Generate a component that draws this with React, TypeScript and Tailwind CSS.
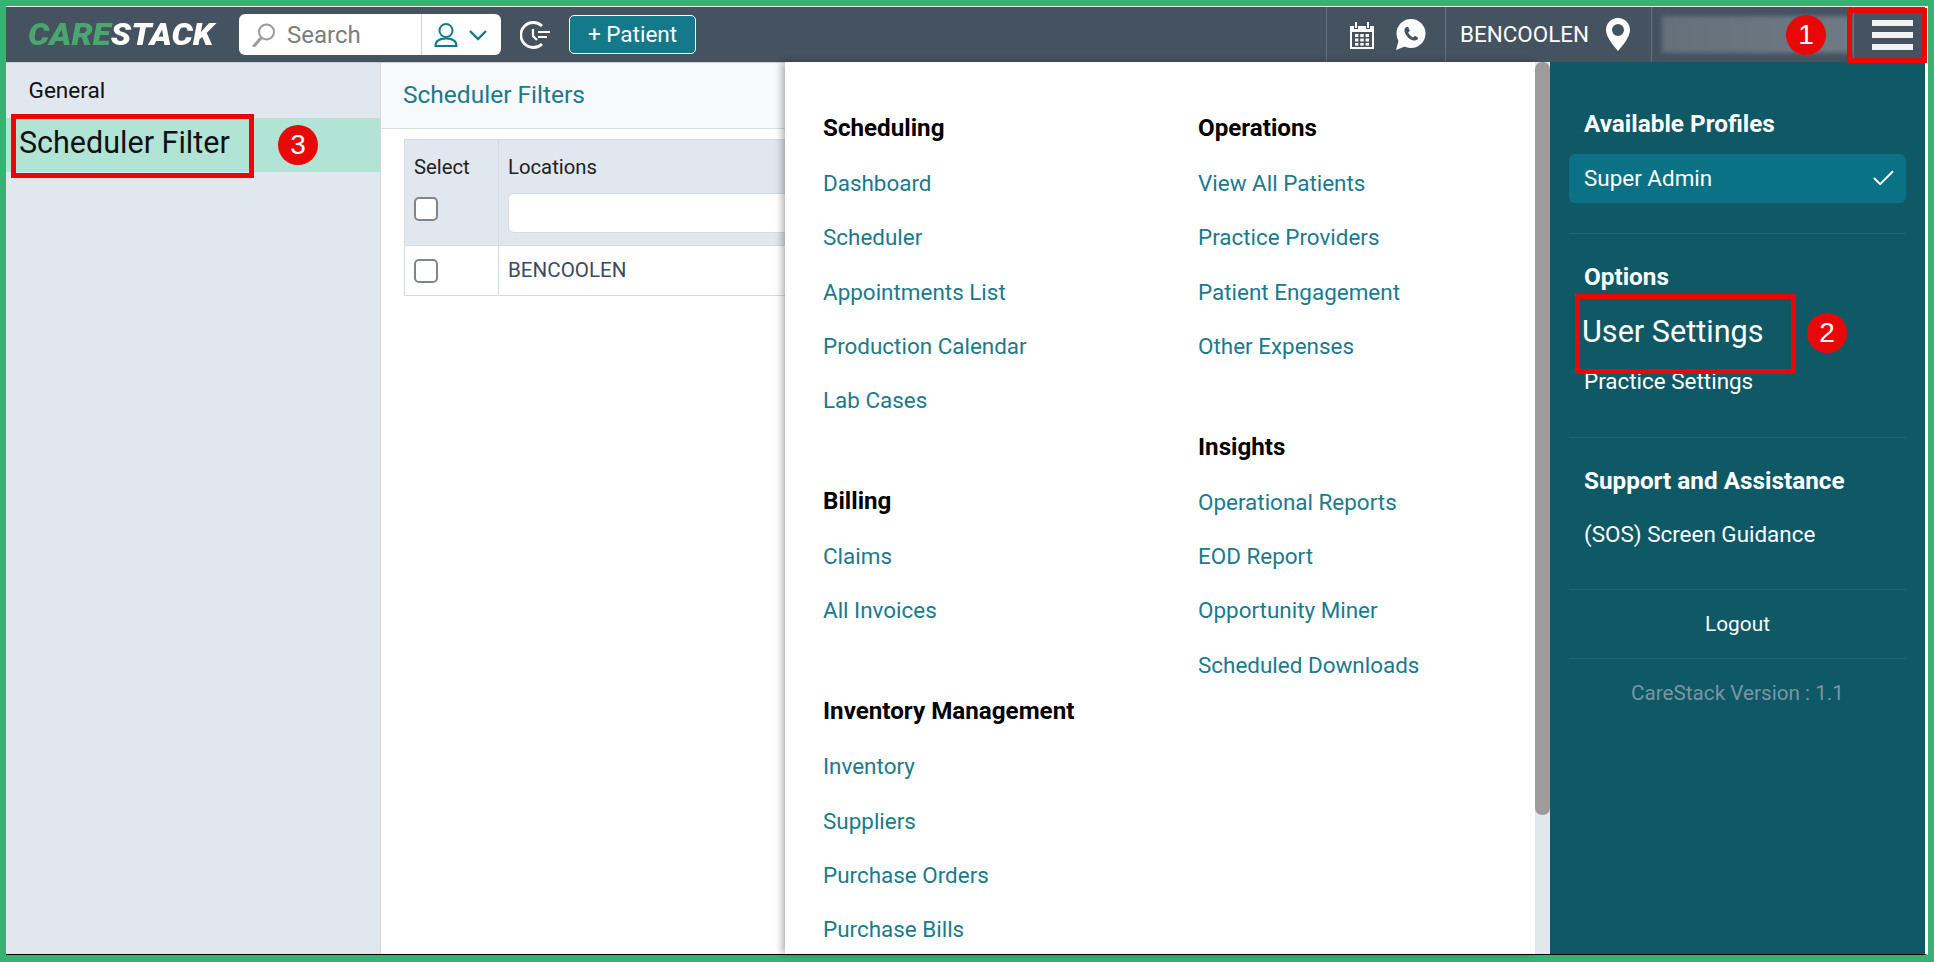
import { Check } from 'lucide-react';

const leftGroups = [
  { title: 'Scheduling', items: ['Dashboard', 'Scheduler', 'Appointments List', 'Production Calendar', 'Lab Cases'] },
  { title: 'Billing', items: ['Claims', 'All Invoices'] },
  { title: 'Inventory Management', items: ['Inventory', 'Suppliers', 'Purchase Orders', 'Purchase Bills'] },
];

const rightGroups = [
  { title: 'Operations', items: ['View All Patients', 'Practice Providers', 'Patient Engagement', 'Other Expenses'] },
  { title: 'Insights', items: ['Operational Reports', 'EOD Report', 'Opportunity Miner', 'Scheduled Downloads'] },
];

function MenuColumn({ groups, width }: { groups: { title: string; items: string[] }[]; width: string }) {
  return (
    <div className={width}>
      {groups.map((g) => (
        <div key={g.title} className="mb-[45px]">
          <div className="flex h-[56.4px] items-center whitespace-nowrap pb-[1px] text-[24.2px] font-bold text-black">{g.title}</div>
          {g.items.map((item) => (
            <div key={item} className="flex h-[54.4px] items-center whitespace-nowrap text-[22.45px] text-[#1b7a8c]">
              {item}
            </div>
          ))}
        </div>
      ))}
    </div>
  );
}

function Checkbox() {
  return <div className="h-[24px] w-[24px] rounded-[5px] border-2 border-[#80858a] bg-white" />;
}

function SearchIcon() {
  return (
    <svg width="24" height="24" viewBox="0 0 24 24" fill="none" stroke="#9b9b9b">
      <circle cx="14.5" cy="9" r="7.5" strokeWidth="2" />
      <path d="M9 15 L2 23" strokeWidth="3" strokeLinecap="round" />
    </svg>
  );
}

function UserIcon() {
  return (
    <svg width="24" height="24" viewBox="0 0 24 24" fill="none" stroke="#147a8b" strokeWidth="2">
      <circle cx="12" cy="7.5" r="6.5" />
      <path d="M1.5 23 C1.5 17.5 6 15.5 12 15.5 C18 15.5 22.5 17.5 22.5 23 Z" />
    </svg>
  );
}

function ClockIcon() {
  return (
    <svg width="31" height="28" viewBox="0 0 31 28" fill="none" stroke="#ffffff" strokeWidth="2.8">
      <path d="M22 5 A12.5 12.5 0 1 0 22 23" />
      <path d="M13 8 V15 L17 19" strokeWidth="2.2" />
      <path d="M18 11 H30 M18 16 H27" strokeWidth="2.2" />
    </svg>
  );
}

function CalendarIcon() {
  return (
    <svg width="26" height="28" viewBox="0 0 26 28" fill="#ffffff">
      <path d="M1 5 H5 V8 H9 V5 H17 V8 H21 V5 H25 V28 H1 Z M3 11 V26 H23 V11 Z" fillRule="evenodd" />
      <rect x="6" y="1" width="2" height="6" />
      <rect x="18" y="1" width="2" height="6" />
      <rect x="6" y="13" width="3.4" height="3" />
      <rect x="11.3" y="13" width="3.4" height="3" />
      <rect x="16.6" y="13" width="3.4" height="3" />
      <rect x="6" y="17.5" width="3.4" height="3" />
      <rect x="11.3" y="17.5" width="3.4" height="3" />
      <rect x="16.6" y="17.5" width="3.4" height="3" />
      <rect x="6" y="22" width="3.4" height="2.6" />
      <rect x="11.3" y="22" width="3.4" height="2.6" />
      <rect x="16.6" y="22" width="3.4" height="2.6" />
    </svg>
  );
}

function WhatsappIcon() {
  return (
    <svg width="31" height="31" viewBox="0 0 31 31">
      <circle cx="16" cy="14.5" r="14.5" fill="#ffffff" />
      <path d="M1 31 L4 20 L11 27 Z" fill="#ffffff" />
      <path
        d="M11.5 8 C9.5 9 8.8 11 10 14 C11.5 17.5 14.5 20.5 18.5 21.5 C21 22 22.8 20.8 23.2 18.8 L19.8 16.8 L18 18.4 C15.8 17.4 14 15.6 13.2 13.5 L14.8 11.8 L13.2 8 Z"
        fill="#45525f"
      />
    </svg>
  );
}

function PinIcon() {
  return (
    <svg width="24" height="33" viewBox="0 0 24 33">
      <path
        d="M12 0 C5.2 0 0 5.2 0 12 C0 19.5 8 28 12 33 C16 28 24 19.5 24 12 C24 5.2 18.8 0 12 0 Z M12 6 A6 6 0 1 1 12 18 A6 6 0 1 1 12 6 Z"
        fill="#ffffff"
        fillRule="evenodd"
      />
    </svg>
  );
}

export default function App() {
  return (
    <div className="relative h-[962px] w-[1934px] overflow-hidden bg-[#36b373] pb-[7px] pl-[6px] pr-[6px] pt-[6px] font-['Roboto',sans-serif]">
      <div className="flex h-full flex-col border-b border-r-[3px] border-t border-b-black border-r-white border-t-[#e8eeec] bg-white">
        {/* top bar */}
        <header className="flex h-[56px] shrink-0 items-stretch border-b border-[#c9ced3] bg-[#45525f]">
          <div className="flex items-center pl-[22px]">
            <div className="w-[187px] origin-left scale-x-[1.08] whitespace-nowrap text-[31px] font-black italic leading-none">
              <span className="text-[#4ba56f]">CARE</span>
              <span className="text-white">STACK</span>
            </div>
            <div className="ml-[24px] flex h-[41px] w-[262px] rounded-[6px] bg-white">
              <div className="flex w-[182px] items-center gap-[11px] pl-[13px] text-[24px] text-[#7d7d7d]">
                <SearchIcon />
                <span>Search</span>
              </div>
              <div className="flex flex-1 items-center gap-[10px] border-l border-[#d3d7da] pl-[12px]">
                <UserIcon />
                <svg width="20" height="12" viewBox="0 0 20 12" fill="none" stroke="#147a8b" strokeWidth="2.4">
                  <path d="M2 2 L10 10 L18 2" />
                </svg>
              </div>
            </div>
            <div className="ml-[19px] flex w-[31px] items-center">
              <ClockIcon />
            </div>
            <button className="ml-[18px] h-[39px] w-[127px] rounded-[5px] border border-white bg-[#147a8b] text-[22.5px] text-white">
              + Patient
            </button>
          </div>
          <div className="ml-auto flex items-stretch">
            <div className="flex w-[119px] items-center border-l border-[#66727d] pl-[22px]">
              <CalendarIcon />
              <div className="ml-[20px]">
                <WhatsappIcon />
              </div>
            </div>
            <div className="flex w-[206px] items-center border-l border-[#66727d] pl-[14px] text-[22.45px] text-white">
              <span>BENCOOLEN</span>
              <div className="ml-[17px]">
                <PinIcon />
              </div>
            </div>
            <div className="flex w-[202px] items-center overflow-hidden border-l border-[#66727d] pl-[10px]">
              <div className="h-[37px] w-[192px] bg-gradient-to-r from-[#64717b] to-[#6e7b85] blur-[2px]" />
            </div>
            <div className="flex w-[72px] flex-col items-start justify-center gap-[6px] border-l border-[#66727d] pl-[18px]">
              <div className="h-[6px] w-[41px] bg-[#f0f2f3]" />
              <div className="h-[6px] w-[41px] bg-[#f0f2f3]" />
              <div className="h-[6px] w-[41px] bg-[#f0f2f3]" />
            </div>
          </div>
        </header>

        <div className="relative flex min-h-0 flex-1">
          {/* left nav */}
          <aside className="w-[375px] shrink-0 border-r border-[#d3d9df] bg-[#e0e7ee] pt-[15px]">
            <div className="pl-[22.5px] text-[22.6px] leading-[26px] text-[#111]">General</div>
            <div className="mt-[14px] flex h-[54px] items-center bg-[#b2e4d6] pb-[4px] pl-[13px] text-[30.5px] text-[#111]">
              Scheduler Filter
            </div>
          </aside>

          {/* page body, mostly hidden behind the menu */}
          <main className="min-w-0 flex-1 overflow-hidden">
            <div className="flex h-[66px] items-center border-b border-[#d8dde2] bg-[#f7f9fb] pl-[22px] text-[24.5px] text-[#1b7a8c]">
              Scheduler Filters
            </div>
            <div className="ml-[23px] mt-[10px] w-[1100px] border border-[#d5dbe1]">
              <div className="grid h-[106px] grid-cols-[94px_1fr] border-b border-[#d5dbe1] bg-[#e0e7ee] text-[20.3px] text-[#222]">
                <div className="border-r border-[#d5dbe1] pl-[9px] pt-[14px]">
                  <div className="leading-[26px]">Select</div>
                  <div className="mt-[17px]">
                    <Checkbox />
                  </div>
                </div>
                <div className="pl-[9px] pt-[14px]">
                  <div className="leading-[26px]">Locations</div>
                  <div className="mt-[13px] h-[40px] w-[700px] rounded-[6px] border border-[#d5dbe1] bg-white" />
                </div>
              </div>
              <div className="grid h-[49px] grid-cols-[94px_1fr] text-[20.6px] text-[#3c4a62]">
                <div className="flex items-center border-r border-[#d5dbe1] pl-[9px]">
                  <Checkbox />
                </div>
                <div className="flex items-center pl-[9px]">BENCOOLEN</div>
              </div>
            </div>
          </main>

          {/* mega menu opened from the hamburger */}
          <div className="absolute -top-px bottom-0 left-[779px] right-0 flex">
            <div className="flex flex-1 overflow-hidden bg-white pl-[38px] pt-[38px] shadow-[-3px_0_7px_rgba(0,0,0,0.3)]">
              <MenuColumn groups={leftGroups} width="w-[375px]" />
              <MenuColumn groups={rightGroups} width="w-[330px]" />
            </div>
            <div className="w-[15px] bg-[#e0e7ee]">
              <div className="h-[753px] rounded-b-[7px] rounded-t-[7px] bg-[#9c9c9c]" />
            </div>
            <div className="w-[375px] bg-[#0f5865] px-[19px] pt-[49px] text-[22.45px] text-white">
              <div className="whitespace-nowrap pl-[15px] text-[24.3px] font-bold leading-[26px]">Available Profiles</div>
              <div className="mt-[17px] flex h-[49px] items-center justify-between rounded-[6px] bg-[#0b7285] pl-[15px] pr-[9px]">
                <span>Super Admin</span>
                <Check size={27} strokeWidth={1.8} />
              </div>
              <div className="mt-[30px] border-t border-[#176c7a]" />
              <div className="mt-[30px] pl-[15px] text-[24.3px] font-bold leading-[26px]">Options</div>
              <div className="mt-[24px] pl-[13px] text-[30.6px] leading-[36px]">User Settings</div>
              <div className="mt-[18px] pb-[1px] pl-[15px] leading-[26px]">Practice Settings</div>
              <div className="mt-[42px] border-t border-[#176c7a]" />
              <div className="mt-[30px] whitespace-nowrap pl-[15px] text-[24.3px] font-bold leading-[26px]">Support and Assistance</div>
              <div className="mt-[27px] pl-[15px] leading-[26px]">(SOS) Screen Guidance</div>
              <div className="mt-[42px] border-t border-[#176c7a]" />
              <div className="mt-[21px] text-center text-[20.8px] leading-[26px]">Logout</div>
              <div className="mt-[21px] border-t border-[#176c7a]" />
              <div className="mt-[21px] text-center text-[20.7px] leading-[26px] text-[#7b95a3]">
                CareStack Version : 1.1
              </div>
            </div>
          </div>
        </div>
      </div>

      {/* tutorial annotations */}
      <div className="absolute left-[1847px] top-[8px] h-[55px] w-[80px] border-[5px] border-[#e80808]" />
      <div className="absolute left-[1575px] top-[294px] h-[80px] w-[221px] border-[5px] border-[#e80808]" />
      <div className="absolute left-[11px] top-[114px] h-[64px] w-[243px] border-[5px] border-[#e80808]" />
      <div className="absolute left-[1786px] top-[15px] flex h-[40px] w-[40px] items-center justify-center rounded-full bg-[#e80808] font-['Liberation_Sans',sans-serif] text-[28px] text-white">
        1
      </div>
      <div className="absolute left-[1807px] top-[313px] flex h-[40px] w-[40px] items-center justify-center rounded-full bg-[#e80808] font-['Liberation_Sans',sans-serif] text-[28px] text-white">
        2
      </div>
      <div className="absolute left-[278px] top-[125px] flex h-[40px] w-[40px] items-center justify-center rounded-full bg-[#e80808] font-['Liberation_Sans',sans-serif] text-[28px] text-white">
        3
      </div>
    </div>
  );
}
